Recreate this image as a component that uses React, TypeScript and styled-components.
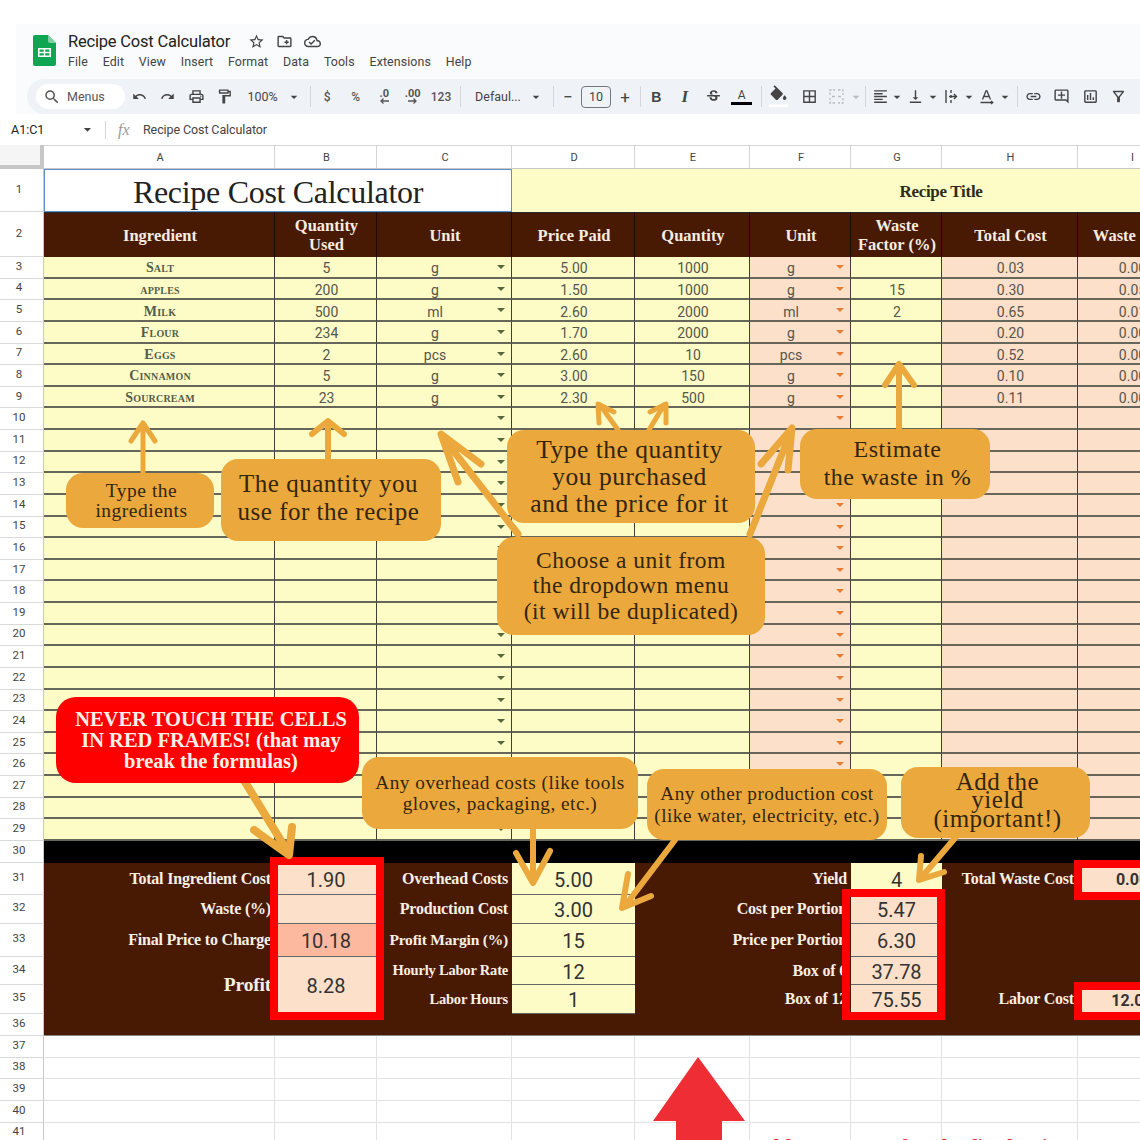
import { Fragment } from 'react'
import styled, { createGlobalStyle } from 'styled-components'
import {
  MdArrowDropDown,
  MdBorderAll,
  MdFormatAlignLeft,
  MdLink,
  MdOutlineAddComment,
  MdOutlineAssessment,
  MdOutlineCloudDone,
  MdOutlineCreateNewFolder,
  MdOutlineFilterAlt,
  MdOutlineFormatPaint,
  MdOutlinePrint,
  MdRedo,
  MdSearch,
  MdStarBorder,
  MdStrikethroughS,
  MdUndo,
  MdVerticalAlignBottom,
  MdViewColumn,
} from 'react-icons/md'

const SERIF = '"Liberation Serif", "Times New Roman", serif'
const UI = 'Roboto, "Liberation Sans", Arial, sans-serif'

const YELLOW = '#fdfcc6'
const PEACH = '#fde0ca'
const BROWN = '#481a04'
const ORANGE = '#eba93d'

const GlobalStyle = createGlobalStyle`
  html, body {
    margin: 0;
    padding: 0;
    background: #fff;
  }
`

const Page = styled.div`
  position: relative;
  width: 1140px;
  height: 1140px;
  overflow: hidden;
  background: #fff;
  font-family: ${UI};
`

const Chrome = styled.div`
  margin: 24px 0 0 16px;
  height: 90px;
  background: #f9fbfd;
  display: flex;
  flex-direction: column;
`

const TitleBar = styled.div`
  height: 55px;
  display: flex;
  align-items: flex-start;
  padding: 11px 0 0 17px;
  box-sizing: border-box;
  gap: 12px;
`

const TitleStack = styled.div`
  display: flex;
  flex-direction: column;
  gap: 2px;
`

const TitleRow = styled.div`
  display: flex;
  align-items: center;
  height: 13px;
  color: #333;
`

const DocTitle = styled.div`
  font-size: 16.5px;
  line-height: 13px;
  letter-spacing: -0.2px;
  color: #222;
  margin-right: 18px;
  white-space: nowrap;
`

const TitleIcon = styled.span`
  display: inline-flex;
  width: 28px;
  font-size: 17px;
  color: #444;
`

const MenuRow = styled.div`
  display: flex;
  gap: 14.8px;
  margin-top: 4px;
  font-size: 12.4px;
  letter-spacing: 0.1px;
  color: #444;
`

const Toolbar = styled.div`
  height: 35px;
  margin-left: 11px;
  padding-left: 9px;
  background: #eff3f8;
  border-radius: 18px 0 0 18px;
  display: flex;
  align-items: center;
  color: #444;
  white-space: nowrap;
`

const SearchPill = styled.div`
  width: 89px;
  height: 25px;
  box-sizing: border-box;
  padding-left: 7px;
  background: #fff;
  border-radius: 13px;
  display: flex;
  align-items: center;
  gap: 6px;
  font-size: 12.5px;
  color: #555;
  flex: none;
`

const Slot = styled.div<{ $w?: number; $muted?: boolean; $size?: number }>`
  width: ${(p) => p.$w ?? 28.5}px;
  flex: none;
  height: 24px;
  display: flex;
  align-items: center;
  justify-content: center;
  font-size: ${(p) => p.$size ?? 17}px;
  color: ${(p) => (p.$muted ? '#b9bdc2' : '#444')};
`

const TextSlot = styled(Slot)`
  font-size: 12.5px;
`

const SymbolSlot = styled(Slot)`
  font-size: 12px;
  font-weight: 500;
  color: #555;
`

const Sep = styled.div<{ $l: number; $r: number }>`
  width: 1px;
  height: 21px;
  flex: none;
  background: #d3d6da;
  margin: 0 ${(p) => p.$r}px 0 ${(p) => p.$l}px;
`

const Caret = styled(Slot)`
  font-size: 16px;
  width: 16px;
`

const DecimalIcon = styled.div`
  display: flex;
  flex-direction: column;
  align-items: center;
  font-size: 11px;
  font-weight: 700;
  line-height: 9px;
  color: #555;
  svg {
    display: block;
  }
`

const SizeBox = styled.div`
  width: 30px;
  height: 22px;
  box-sizing: border-box;
  margin-left: 2px;
  border: 1px solid #777;
  border-radius: 4px;
  display: flex;
  align-items: center;
  justify-content: center;
  font-size: 12.5px;
  flex: none;
  color: #444;
`

const BoldGlyph = styled.span`
  font-family: "Liberation Sans", Arial, sans-serif;
  font-size: 14px;
  font-weight: 700;
`

const ItalicGlyph = styled.span`
  font-family: ${SERIF};
  font-size: 17px;
  font-weight: 700;
  font-style: italic;
`

const TextColor = styled.div`
  display: flex;
  flex-direction: column;
  align-items: center;
  width: 21px;
  font-size: 12px;
  line-height: 13px;
  color: #444;
  &::after {
    content: '';
    width: 21px;
    height: 3px;
    background: #000;
  }
`

const FormulaBar = styled.div`
  height: 31px;
  display: flex;
  align-items: center;
  padding-left: 11px;
  background: #fff;
`

const NameBox = styled.div`
  width: 68px;
  font-size: 12.5px;
  color: #222;
`

const NameCaret = styled.div`
  display: flex;
  width: 26px;
  font-size: 17px;
  color: #444;
`

const FxDivider = styled.div`
  width: 1px;
  height: 18px;
  background: #d5d5d5;
  margin-right: 12px;
`

const FxMark = styled.div`
  font-family: ${SERIF};
  font-style: italic;
  font-size: 16px;
  color: #999;
  width: 25px;
`

const FormulaText = styled.div`
  font-size: 12.5px;
  letter-spacing: -0.1px;
  color: #444;
`

const Sheet = styled.div`
  display: grid;
  width: 1370px;
  grid-template-columns: 44px 231px 102px 135px 123px 115px 101px 91px 136px 108px 184px;
  grid-template-rows:
    24px 43px 45px repeat(27, 21.63px) 22px 32px 29px 33px 28px 29px 22px repeat(6, 21.67px);
`

const Corner = styled.div`
  grid-column: 1;
  box-sizing: border-box;
  background: #f5f5f5;
  border-right: 4px solid #c7c7c7;
  border-bottom: 4px solid #c7c7c7;
`

const ColHead = styled.div`
  box-sizing: border-box;
  border-top: 1px solid #d5d5d5;
  border-right: 1px solid #d5d5d5;
  border-bottom: 1px solid #c8c8c8;
  display: flex;
  align-items: center;
  justify-content: center;
  padding-left: 2px;
  font-size: 11px;
  color: #444;
`

const RowNum = styled.div`
  grid-column: 1;
  box-sizing: border-box;
  border-right: 1px solid #c8c8c8;
  border-bottom: 1px solid #d9d9d9;
  display: flex;
  align-items: center;
  justify-content: center;
  padding: 0 5px 3px 0;
  font-size: 11.5px;
  color: #444;
`

const TitleCell = styled.div`
  grid-column: span 3;
  box-sizing: border-box;
  border: 1.5px solid #5f8fc4;
  padding-top: 3px;
  display: flex;
  align-items: center;
  justify-content: center;
  font-family: ${SERIF};
  font-size: 32px;
  letter-spacing: -0.3px;
  color: #222;
`

const RecipeTitle = styled.div`
  grid-column: span 7;
  box-sizing: border-box;
  background: ${YELLOW};
  padding-top: 3px;
  display: flex;
  align-items: center;
  justify-content: center;
  font-family: ${SERIF};
  font-size: 17px;
  font-weight: 700;
  letter-spacing: -0.3px;
  color: #2c2c1c;
`

const HeadCell = styled.div`
  box-sizing: border-box;
  background: ${BROWN};
  border-top: 1px solid #2a2a2a;
  border-right: 1px solid #1c0a02;
  display: flex;
  align-items: center;
  justify-content: center;
  padding: 0 0 0 2px;
  text-align: center;
  font-family: ${SERIF};
  font-size: 16.5px;
  font-weight: 700;
  line-height: 19px;
  color: #f6ece0;
  white-space: pre-line;
`

const DataCell = styled.div<{ $tone?: 'yellow' | 'peach' }>`
  position: relative;
  box-sizing: border-box;
  background: ${(p) => (p.$tone === 'peach' ? PEACH : YELLOW)};
  border-right: 1px solid #3f3f34;
  border-bottom: 2px solid #66675a;
  display: flex;
  align-items: center;
  justify-content: center;
  padding: 3px 0 0 2px;
  font-size: 14px;
  color: #55564c;
`

const NameCell = styled(DataCell)`
  font-family: ${SERIF};
  font-variant: small-caps;
  font-weight: 700;
  font-size: 14px;
  letter-spacing: 0.2px;
  color: #535d4c;
`

const UnitText = styled.span`
  margin-right: 20px;
`

const Chevron = styled.i<{ $orange?: boolean }>`
  position: absolute;
  right: 6px;
  top: 8px;
  width: 0;
  height: 0;
  border-left: 4px solid transparent;
  border-right: 4px solid transparent;
  border-top: 4px solid ${(p) => (p.$orange ? '#e57d33' : '#55663a')};
`

const BlackBar = styled.div`
  grid-column: span 10;
  background: #000;
`

const Label = styled.div<{ $span?: number; $rows?: number; $size?: number }>`
  grid-column: span ${(p) => p.$span ?? 1};
  grid-row: span ${(p) => p.$rows ?? 1};
  box-sizing: border-box;
  min-width: 0;
  background: ${BROWN};
  display: flex;
  align-items: center;
  justify-content: flex-end;
  padding-right: 4px;
  font-family: ${SERIF};
  font-size: ${(p) => p.$size ?? 16}px;
  font-weight: 700;
  letter-spacing: -0.2px;
  color: #f8efe4;
  white-space: nowrap;
`

const Value = styled.div<{ $fill: string; $rows?: number; $strong?: boolean }>`
  grid-row: span ${(p) => p.$rows ?? 1};
  box-sizing: border-box;
  background: ${(p) => p.$fill};
  border-bottom: 1px solid #666;
  display: flex;
  align-items: center;
  justify-content: center;
  padding-top: 3px;
  font-size: ${(p) => (p.$strong ? 16 : 20)}px;
  font-weight: ${(p) => (p.$strong ? 700 : 400)};
  color: #333;
`

const BrownFill = styled.div`
  grid-column: span 10;
  background: ${BROWN};
  border-bottom: 1px solid #888;
`

const BlankCell = styled.div`
  box-sizing: border-box;
  border-right: 1px solid #e2e2e2;
  border-bottom: 1px solid #e2e2e2;
`

const ArrowLayer = styled.svg`
  position: absolute;
  left: 0;
  top: 0;
`

const Bubble = styled.div<{
  $x: number
  $y: number
  $w: number
  $h: number
  $size: number
  $line: number
  $r?: number
  $shift?: string
}>`
  position: absolute;
  box-sizing: border-box;
  left: ${(p) => p.$x}px;
  top: ${(p) => p.$y}px;
  width: ${(p) => p.$w}px;
  height: ${(p) => p.$h}px;
  padding: ${(p) => p.$shift ?? '0'};
  border-radius: ${(p) => p.$r ?? 17}px;
  background: ${ORANGE};
  display: flex;
  align-items: center;
  justify-content: center;
  text-align: center;
  white-space: pre-line;
  font-family: ${SERIF};
  font-size: ${(p) => p.$size}px;
  line-height: ${(p) => p.$line}px;
  letter-spacing: 0.5px;
  color: #33250b;
`

const Warning = styled(Bubble)`
  background: #fe0000;
  color: #fff1e8;
  font-weight: 700;
  letter-spacing: 0;
`

const RedFrame = styled.div<{ $x: number; $y: number; $w: number; $h: number }>`
  position: absolute;
  box-sizing: border-box;
  left: ${(p) => p.$x}px;
  top: ${(p) => p.$y}px;
  width: ${(p) => p.$w}px;
  height: ${(p) => p.$h}px;
  border: 8px solid #fe0000;
`

const BottomNote = styled.div`
  position: absolute;
  left: 752px;
  top: 1135px;
  font-family: ${SERIF};
  font-size: 21px;
  font-weight: 700;
  letter-spacing: 0.6px;
  color: #e7282e;
  white-space: nowrap;
`

const COLUMNS = ['A', 'B', 'C', 'D', 'E', 'F', 'G', 'H', 'I']
const HEADERS = [
  'Ingredient',
  'Quantity\nUsed',
  'Unit',
  'Price Paid',
  'Quantity',
  'Unit',
  'Waste\nFactor (%)',
  'Total Cost',
  'Waste Cost',
]
const MENUS = ['File', 'Edit', 'View', 'Insert', 'Format', 'Data', 'Tools', 'Extensions', 'Help']

const INGREDIENTS = [
  ['Salt', '5', 'g', '5.00', '1000', 'g', '', '0.03', '0.00'],
  ['apples', '200', 'g', '1.50', '1000', 'g', '15', '0.30', '0.05'],
  ['Milk', '500', 'ml', '2.60', '2000', 'ml', '2', '0.65', '0.01'],
  ['Flour', '234', 'g', '1.70', '2000', 'g', '', '0.20', '0.00'],
  ['Eggs', '2', 'pcs', '2.60', '10', 'pcs', '', '0.52', '0.00'],
  ['Cinnamon', '5', 'g', '3.00', '150', 'g', '', '0.10', '0.00'],
  ['Sourcream', '23', 'g', '2.30', '500', 'g', '', '0.11', '0.00'],
]

// shaft plus two barbs, all in page coordinates
const ARROWS = [
  { d: 'M143 473V424M131 441L143 423L155 441', w: 5 },
  { d: 'M328 459V423M312 434L328 421L344 434', w: 6 },
  { d: 'M518 534L445 440M458 482L441 434L481 464', w: 7 },
  { d: 'M750 534L790 434M761 464L792 428L788 470', w: 7 },
  { d: 'M618 430L600 405M599 423L598 404L614 412', w: 5 },
  { d: 'M649 430L664 405M650 412L666 404L666 423', w: 5 },
  { d: 'M899 430V366M885 385L899 364L914 385', w: 6 },
  { d: 'M245 782L288 852M254 830L289 855L292 827', w: 8 },
  { d: 'M533 829V882M516 853L533 883L550 851', w: 6 },
  { d: 'M675 840L625 906M628 874L622 908L651 896', w: 6 },
  { d: 'M955 838L921 878M921 856L919 880L944 872', w: 6 },
]

function MergeIcon() {
  return (
    <svg width="15" height="15" viewBox="0 0 15 15" fill="none" stroke="currentColor" strokeWidth="1.3" strokeDasharray="2.5 1.5">
      <path d="M1 6V1h5M9 1h5v5M14 9v5H9M6 14H1V9" />
      <path d="M3 7.5h3M12 7.5H9" strokeDasharray="none" />
    </svg>
  )
}

function WrapIcon() {
  return (
    <svg width="15" height="15" viewBox="0 0 15 15" fill="none" stroke="currentColor" strokeWidth="1.4">
      <path d="M2 1v13M7 1v3M7 6v3M7 11v3M5 7.5h7M10 5l2.500 2.500L10 10" />
    </svg>
  )
}

function RotateIcon() {
  return (
    <svg width="16" height="16" viewBox="0 0 16 16" fill="none" stroke="currentColor" strokeWidth="1.3">
      <path d="M3.500 10.500L7 2h1l3.500 8.500M5 7.500h5M1.500 13.500h12M12 12l1.800 1.500L12 15" />
    </svg>
  )
}

function FillIcon() {
  return (
    <svg width="21" height="24" viewBox="0 0 24 27">
      <path d="M16.56 8.94L7.62 0 6.21 1.41l2.38 2.38-5.15 5.15c-.59.59-.59 1.54 0 2.12l5.5 5.5c.29.29.68.44 1.06.44s.77-.15 1.06-.44l5.5-5.5c.59-.58.59-1.53 0-2.12z" fill="#444" />
      <path d="M19 11.5s-2 2.17-2 3.5c0 1.1.9 2 2 2s2-.9 2-2c0-1.33-2-3.5-2-3.5z" fill="#444" />
      <rect x="1" y="22" width="22" height="3" fill="#fff" />
    </svg>
  )
}

function DecimalArrow({ flip }: { flip?: boolean }) {
  return (
    <svg width="9" height="6" viewBox="0 0 9 6" fill="none" stroke="currentColor" strokeWidth="1.300">
      <path d={flip ? 'M0 3h8M5.500 0.500L8 3L5.500 5.500' : 'M9 3H1M3.500 0.500L1 3L3.500 5.500'} />
    </svg>
  )
}

function SheetsLogo() {
  return (
    <svg width="23" height="31" viewBox="0 0 23 31">
      <path d="M2 0H15L23 8V29a2 2 0 0 1-2 2H2a2 2 0 0 1-2-2V2a2 2 0 0 1 2-2Z" fill="#0fa653" />
      <path d="M15 0L23 8H17a2 2 0 0 1-2-2Z" fill="#7fd0a2" />
      <path d="M5 13h13v9H5Zm1.500 1.500v2.300h4.200v-2.300Zm5.700 0v2.300h4.300v-2.300Zm-5.700 3.700v2.300h4.200v-2.300Zm5.700 0v2.300h4.300v-2.300Z" fill="#fff" fillRule="evenodd" />
    </svg>
  )
}

function Header() {
  return (
    <Chrome>
      <TitleBar>
        <SheetsLogo />
        <TitleStack>
          <TitleRow>
            <DocTitle>Recipe Cost Calculator</DocTitle>
            <TitleIcon><MdStarBorder /></TitleIcon>
            <TitleIcon><MdOutlineCreateNewFolder /></TitleIcon>
            <TitleIcon><MdOutlineCloudDone /></TitleIcon>
          </TitleRow>
          <MenuRow>
            {MENUS.map((menu) => (
              <span key={menu}>{menu}</span>
            ))}
          </MenuRow>
        </TitleStack>
      </TitleBar>
      <Toolbar>
        <SearchPill>
          <MdSearch size={18} />
          Menus
        </SearchPill>
        <Slot $size={15}><MdUndo /></Slot>
        <Slot $size={15}><MdRedo /></Slot>
        <Slot><MdOutlinePrint /></Slot>
        <Slot><MdOutlineFormatPaint /></Slot>
        <TextSlot $w={47}>100%</TextSlot>
        <Caret><MdArrowDropDown /></Caret>
        <Sep $l={8} $r={2} />
        <SymbolSlot>$</SymbolSlot>
        <SymbolSlot>%</SymbolSlot>
        <Slot><DecimalIcon>.0<DecimalArrow /></DecimalIcon></Slot>
        <Slot><DecimalIcon>.00<DecimalArrow flip /></DecimalIcon></Slot>
        <SymbolSlot $w={28}>123</SymbolSlot>
        <Sep $l={5} $r={7} />
        <TextSlot $w={60}>Defaul...</TextSlot>
        <Caret><MdArrowDropDown /></Caret>
        <Sep $l={9} $r={3} />
        <Slot $w={22}>−</Slot>
        <SizeBox>10</SizeBox>
        <Slot $w={28}>+</Slot>
        <Sep $l={1} $r={1} />
        <Slot><BoldGlyph>B</BoldGlyph></Slot>
        <Slot><ItalicGlyph>I</ItalicGlyph></Slot>
        <Slot><MdStrikethroughS /></Slot>
        <Slot><TextColor>A</TextColor></Slot>
        <Sep $l={5} $r={2} />
        <Slot $w={29}><FillIcon /></Slot>
        <Slot $w={32}><MdBorderAll /></Slot>
        <Slot $w={23} $muted><MergeIcon /></Slot>
        <Caret $muted><MdArrowDropDown /></Caret>
        <Sep $l={1} $r={5} />
        <Slot $w={18}><MdFormatAlignLeft /></Slot>
        <Caret><MdArrowDropDown /></Caret>
        <Slot $w={20}><MdVerticalAlignBottom /></Slot>
        <Caret><MdArrowDropDown /></Caret>
        <Slot $w={20}><WrapIcon /></Slot>
        <Caret><MdArrowDropDown /></Caret>
        <Slot $w={20}><RotateIcon /></Slot>
        <Caret><MdArrowDropDown /></Caret>
        <Sep $l={4} $r={1} />
        <Slot><MdLink /></Slot>
        <Slot><MdOutlineAddComment /></Slot>
        <Slot><MdOutlineAssessment /></Slot>
        <Slot><MdOutlineFilterAlt /></Slot>
        <Slot><MdViewColumn /></Slot>
      </Toolbar>
    </Chrome>
  )
}

function IngredientRow({ n, cells }: { n: number; cells: string[] }) {
  const [name, qty, unit, price, bought, unit2, waste, total, wasteCost] = cells
  return (
    <>
      <RowNum>{n}</RowNum>
      <NameCell>{name}</NameCell>
      <DataCell>{qty}</DataCell>
      <DataCell>
        <UnitText>{unit}</UnitText>
        <Chevron />
      </DataCell>
      <DataCell>{price}</DataCell>
      <DataCell>{bought}</DataCell>
      <DataCell $tone="peach">
        <UnitText>{unit2}</UnitText>
        <Chevron $orange />
      </DataCell>
      <DataCell>{waste}</DataCell>
      <DataCell $tone="peach">{total}</DataCell>
      <DataCell $tone="peach">{wasteCost}</DataCell>
    </>
  )
}

function Summary() {
  return (
    <>
      <RowNum>30</RowNum>
      <BlackBar />

      <RowNum>31</RowNum>
      <Label>Total Ingredient Cost</Label>
      <Value $fill={PEACH}>1.90</Value>
      <Label>Overhead Costs</Label>
      <Value $fill={YELLOW}>5.00</Value>
      <Label $span={2}>Yield</Label>
      <Value $fill={YELLOW}>4</Value>
      <Label>Total Waste Cost</Label>
      <Value $fill={PEACH} $strong>0.00</Value>

      <RowNum>32</RowNum>
      <Label>Waste (%)</Label>
      <Value $fill={PEACH} />
      <Label>Production Cost</Label>
      <Value $fill={YELLOW}>3.00</Value>
      <Label $span={2}>Cost per Portion</Label>
      <Value $fill={PEACH}>5.47</Value>
      <Label $span={2} />

      <RowNum>33</RowNum>
      <Label>Final Price to Charge</Label>
      <Value $fill="#fcb99f">10.18</Value>
      <Label $size={15.500}>Profit Margin (%)</Label>
      <Value $fill={YELLOW}>15</Value>
      <Label $span={2}>Price per Portion</Label>
      <Value $fill={PEACH}>6.30</Value>
      <Label $span={2} />

      <RowNum>34</RowNum>
      <Label $rows={2} $size={19.500}>Profit</Label>
      <Value $fill={PEACH} $rows={2}>8.28</Value>
      <Label $size={14.500}>Hourly Labor Rate</Label>
      <Value $fill={YELLOW}>12</Value>
      <Label $span={2}>Box of 6</Label>
      <Value $fill={PEACH}>37.78</Value>
      <Label $span={2} />

      <RowNum>35</RowNum>
      <Label $size={14.500}>Labor Hours</Label>
      <Value $fill={YELLOW}>1</Value>
      <Label $span={2}>Box of 12</Label>
      <Value $fill={PEACH}>75.55</Value>
      <Label>Labor Cost</Label>
      <Value $fill={PEACH} $strong>12.00</Value>

      <RowNum>36</RowNum>
      <BrownFill />
    </>
  )
}

function Grid() {
  const emptyRows = Array.from({ length: 20 }, (_, i) => i + 10)
  const blankRows = [37, 38, 39, 40, 41]
  return (
    <Sheet>
      <Corner />
      {COLUMNS.map((col) => (
        <ColHead key={col}>{col}</ColHead>
      ))}

      <RowNum>1</RowNum>
      <TitleCell>Recipe Cost Calculator</TitleCell>
      <RecipeTitle>Recipe Title</RecipeTitle>

      <RowNum>2</RowNum>
      {HEADERS.map((head, i) => (
        <HeadCell key={i}>{head}</HeadCell>
      ))}

      {INGREDIENTS.map((cells, i) => (
        <IngredientRow key={i} n={i + 3} cells={cells} />
      ))}
      {emptyRows.map((n) => (
        <IngredientRow key={n} n={n} cells={['', '', '', '', '', '', '', '', '']} />
      ))}

      <Summary />

      {blankRows.map((n) => (
        <Fragment key={n}>
          <RowNum>{n}</RowNum>
          {COLUMNS.map((col) => (
            <BlankCell key={col} />
          ))}
        </Fragment>
      ))}
    </Sheet>
  )
}

function Annotations() {
  return (
    <>
      <RedFrame $x={270} $y={857} $w={114} $h={163} />
      <RedFrame $x={842} $y={889} $w={103} $h={131} />
      <RedFrame $x={1074} $y={860} $w={90} $h={40} />
      <RedFrame $x={1074} $y={982} $w={90} $h={38} />

      <ArrowLayer width="1140" height="1140" viewBox="0 0 1140 1140">
        {ARROWS.map((arrow) => (
          <path
            key={arrow.d}
            d={arrow.d}
            fill="none"
            stroke={ORANGE}
            strokeWidth={arrow.w}
            strokeLinecap="round"
            strokeLinejoin="round"
          />
        ))}
        <path d="M698 1057L745 1121H722V1140H676V1121H653Z" fill="#ee2e34" />
      </ArrowLayer>

      <Bubble $x={66} $y={473} $w={148} $h={55} $size={19.5} $line={20} $shift="0 0 0 3px">{'Type the\ningredients'}</Bubble>
      <Bubble $x={221} $y={459} $w={220} $h={82} $size={25} $line={28} $shift="0 5px 4px 0">{'The quantity you\nuse for the recipe'}</Bubble>
      <Bubble $x={507} $y={430} $w={248} $h={93} $size={25.5} $line={27} $shift="0 3px 0 0">{'Type the quantity\nyou purchased\nand the price for it'}</Bubble>
      <Bubble $x={800} $y={429} $w={190} $h={70} $size={24} $line={28} $shift="0 0 2px 5px">{'Estimate\nthe waste in %'}</Bubble>
      <Bubble $x={497} $y={537} $w={268} $h={98} $size={23.5} $line={25.5}>{'Choose a unit from\nthe dropdown menu\n(it will be duplicated)'}</Bubble>
      <Warning $x={56} $y={697} $w={303} $h={86} $size={20.5} $line={21} $r={20} $shift="0 0 0 7px">{'NEVER TOUCH THE CELLS\nIN RED FRAMES! (that may\nbreak the formulas)'}</Warning>
      <Bubble $x={362} $y={757} $w={276} $h={72} $size={19.3} $line={21} $shift="0 0 1px 0">{'Any overhead costs (like tools\ngloves, packaging, etc.)'}</Bubble>
      <Bubble $x={647} $y={769} $w={240} $h={71} $size={19.2} $line={21.5}>{'Any other production cost\n(like water, electricity, etc.)'}</Bubble>
      <Bubble $x={901} $y={767} $w={189} $h={71} $size={25} $line={18.5} $shift="0 0 4px 4px">{'Add the\nyield\n(important!)'}</Bubble>

      <BottomNote>Add your costs for the final price</BottomNote>
    </>
  )
}

export default function App() {
  return (
    <Page>
      <GlobalStyle />
      <Header />
      <FormulaBar>
        <NameBox>A1:C1</NameBox>
        <NameCaret><MdArrowDropDown /></NameCaret>
        <FxDivider />
        <FxMark>fx</FxMark>
        <FormulaText>Recipe Cost Calculator</FormulaText>
      </FormulaBar>
      <Grid />
      <Annotations />
    </Page>
  )
}
